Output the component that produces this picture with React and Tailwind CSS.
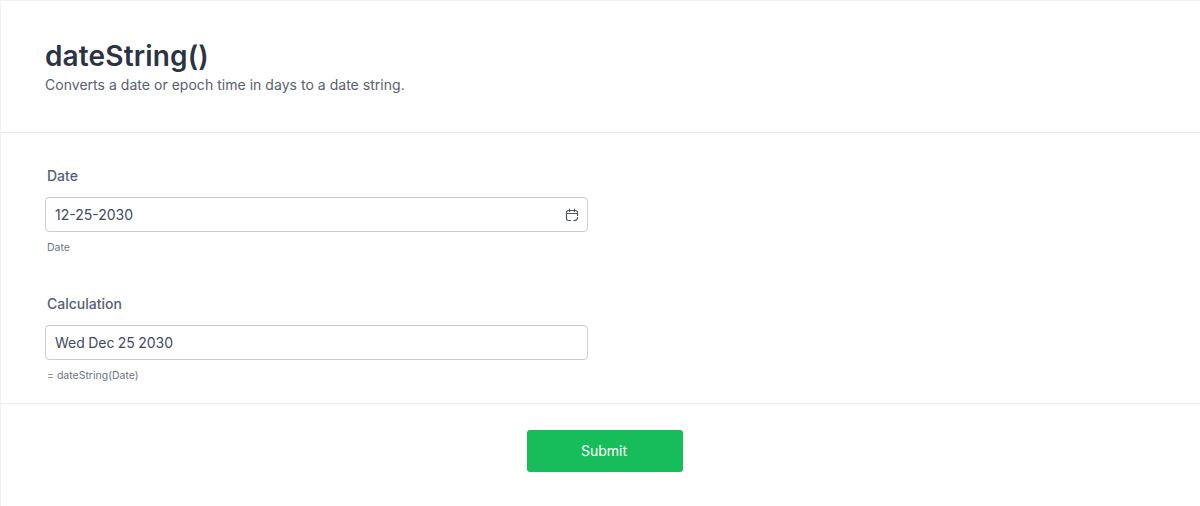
import React from 'react';

const Field = ({ label, value, hint, icon }) => (
  <div className="w-[543px]">
    <label className="block pl-[2px] text-[14px] leading-[20px] font-[450] text-[#565e75]">{label}</label>
    <div className="mt-[11px] flex h-[35px] items-center justify-between rounded-[4px] border border-[#c8ccd8] bg-white pl-[9px] pr-[8px] text-[14px] text-[#404b5f] [word-spacing:-0.6px]">
      <span>{value}</span>
      {icon}
    </div>
    <p className="mt-[9px] pl-[2px] text-[10.5px] leading-[14px] text-[#6c7486]">{hint}</p>
  </div>
);

const CalendarIcon = () => (
  <svg width="14" height="14" viewBox="0 0 14 14" fill="none" stroke="#4b5565" strokeWidth="1.2" strokeLinecap="round" strokeLinejoin="round">
    <path d="M5.5 12.5H3.5a2 2 0 0 1-2-2V4.5a2 2 0 0 1 2-2h7a2 2 0 0 1 2 2v3" />
    <path d="M4.5 1v2.5M9.5 1v2.5M1.5 5.5h11" />
    <path d="M12.5 9.5a3 3 0 0 1-3.5 3" />
  </svg>
);

export default function App() {
  return (
    <div className="min-h-[506px] border-t border-l border-[#f1f2f6] bg-white font-['Inter',sans-serif]">
      <header className="h-[132px] border-b border-[#e3e4ec] pl-[44px] pt-[38px]">
        <h1 className="text-[28px] leading-[34px] font-semibold tracking-[0.15px] text-[#2c3345]">dateString()</h1>
        <p className="mt-[2px] text-[14px] leading-[20px] tracking-[0.03px] text-[#57606f]">Converts a date or epoch time in days to a date string.</p>
      </header>
      <main className="flex h-[271px] flex-col gap-[39px] border-b border-[#eceef3] pl-[44px] pt-[33px]">
        <Field label="Date" value="12-25-2030" hint="Date" icon={<CalendarIcon />} />
        <Field label="Calculation" value="Wed Dec 25 2030" hint="= dateString(Date)" />
      </main>
      <footer className="flex justify-center pl-[9px] pt-[26px]">
        <button className="h-[42px] w-[156px] rounded-[3px] bg-[#18bd5b] pb-[2px] pr-[2px] text-[14px] text-white">Submit</button>
      </footer>
    </div>
  );
}
